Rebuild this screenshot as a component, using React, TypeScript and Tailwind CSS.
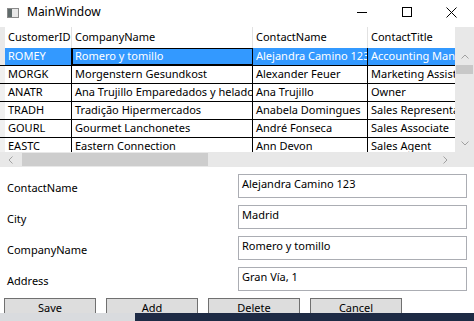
export default function App() {
  const rows = [
    { id: 'ROMEY', company: 'Romero y tomillo', contact: 'Alejandra Camino 123', title: 'Accounting Manager' },
    { id: 'MORGK', company: 'Morgenstern Gesundkost', contact: 'Alexander Feuer', title: 'Marketing Assistant' },
    { id: 'ANATR', company: 'Ana Trujillo Emparedados y helados', contact: 'Ana Trujillo', title: 'Owner' },
    { id: 'TRADH', company: 'Tradição Hipermercados', contact: 'Anabela Domingues', title: 'Sales Representative' },
    { id: 'GOURL', company: 'Gourmet Lanchonetes', contact: 'André Fonseca', title: 'Sales Associate' },
    { id: 'EASTC', company: 'Eastern Connection', contact: 'Ann Devon', title: 'Sales Agent' },
  ]

  const fields = [
    { label: 'ContactName', value: 'Alejandra Camino 123' },
    { label: 'City', value: 'Madrid' },
    { label: 'CompanyName', value: 'Romero y tomillo' },
    { label: 'Address', value: 'Gran Vía, 1' },
  ]

  const cell = 'shrink-0 h-full px-[3px] flex items-center whitespace-nowrap overflow-hidden'

  return (
    <div className="relative w-[474px] h-[321px] bg-white overflow-hidden flex flex-col text-[11px] text-black" style={{ fontFamily: '"Noto Sans", "Open Sans", sans-serif' }}>
      {/* title bar */}
      <div className="h-[27px] shrink-0 flex items-center">
        <svg width="12" height="10" viewBox="0 0 12 10" className="ml-[7px] mt-[-1px]">
          <rect x="0.5" y="0.5" width="11" height="9" fill="#e8e8e8" stroke="#8a8a8a" />
          <rect x="1" y="1" width="4" height="8" fill="#5f6a6a" />
        </svg>
        <span className="ml-[8px] mt-[-3px] text-[12px]">MainWindow</span>
        <div className="ml-auto flex items-center h-full">
          <div className="w-[46px] h-full flex items-center justify-center">
            <div className="w-[10px] h-px bg-black mt-[-3px]" />
          </div>
          <div className="w-[43px] h-full flex items-center justify-center">
            <div className="w-[10px] h-[10px] border border-black mt-[-3px]" />
          </div>
          <div className="w-[46px] h-full flex items-center justify-center">
            <svg width="11" height="11" viewBox="0 0 11 11" className="mt-[-3px]">
              <path d="M0.5 0.5 L10.5 10.5 M10.5 0.5 L0.5 10.5" stroke="black" strokeWidth="1" />
            </svg>
          </div>
        </div>
      </div>

      {/* data grid */}
      <div className="h-[140px] shrink-0 flex relative">
        <div className="w-[455px] flex flex-col overflow-hidden">
          <div className="h-[21px] shrink-0 flex bg-white">
            <div className="w-[5px] shrink-0 bg-[#e9e9e9]" />
            <div className={`${cell} w-[67px] border-r border-[#e2e2e2]`}>CustomerID</div>
            <div className={`${cell} w-[181px] border-r border-[#e2e2e2]`}>CompanyName</div>
            <div className={`${cell} w-[115px] border-r border-[#e2e2e2]`}>ContactName</div>
            <div className={`${cell} w-[90px]`}>ContactTitle</div>
          </div>
          {rows.map((r, i) => {
            const sel = i === 0
            return (
              <div key={r.id} className={`h-[18px] shrink-0 flex border-b border-black ${sel ? 'bg-[#3399ff] text-white' : 'bg-white'}`}>
                <div className={`w-[5px] shrink-0 ${sel ? 'bg-[#e9e9e9]' : 'bg-[#f0f0f0]'}`} />
                <div className={`${cell} w-[67px] border-r border-black`}>{r.id}</div>
                <div className={`${cell} w-[181px] border-r border-black ${sel ? 'outline outline-1 -outline-offset-1 outline-black' : ''}`}>{r.company}</div>
                <div className={`${cell} w-[115px] border-r border-black`}>{r.contact}</div>
                <div className={`${cell} w-[90px]`}>{r.title}</div>
              </div>
            )
          })}
        </div>
        {/* vertical scrollbar */}
        <div className="w-[19px] flex flex-col bg-[#e8e8e8]">
          <div className="h-[21px] shrink-0 bg-[#e8e8e8]" />
          <div className="h-[17px] shrink-0 flex items-center justify-center">
            <svg width="8" height="5" viewBox="0 0 8 5"><path d="M0.5 4.5 L4 1 L7.5 4.5" fill="none" stroke="#a0a0a0" /></svg>
          </div>
          <div className="mx-[1px] h-[9px] bg-[#c8c8c8]" />
          <div className="flex-1" />
          <div className="h-[17px] shrink-0 flex items-center justify-center mb-[15px]">
            <svg width="8" height="5" viewBox="0 0 8 5"><path d="M0.5 0.5 L4 4 L7.5 0.5" fill="none" stroke="#a0a0a0" /></svg>
          </div>
        </div>
        {/* horizontal scrollbar */}
        <div className="absolute left-0 bottom-0 w-[455px] h-[15px] bg-[#e8e8e8] flex items-center">
          <div className="w-[20px] h-full flex items-center justify-center">
            <svg width="5" height="8" viewBox="0 0 5 8"><path d="M4.5 0.5 L1 4 L4.5 7.5" fill="none" stroke="#a0a0a0" /></svg>
          </div>
          <div className="ml-[2px] w-[186px] h-[13px] bg-[#cdcdcd]" />
          <div className="ml-auto w-[20px] h-full flex items-center justify-center">
            <svg width="5" height="8" viewBox="0 0 5 8"><path d="M0.5 0.5 L4 4 L0.5 7.5" fill="none" stroke="#a0a0a0" /></svg>
          </div>
        </div>
      </div>

      {/* form */}
      <div className="flex flex-col gap-[7px] pt-[7px] pr-[7px]">
        {fields.map(f => (
          <div key={f.label} className="h-[24px] flex items-center">
            <span className="pl-[7px] w-[238px] mt-[5px]">{f.label}</span>
            <div className="flex-1 h-full border border-[#abadb3] flex items-center px-[3px]">
              <span className="mt-[-3px]">{f.value}</span>
            </div>
          </div>
        ))}
      </div>

      <div className="flex gap-[10px] pl-[4px] mt-[7px]">
        {['Save', 'Add', 'Delete', 'Cancel'].map(b => (
          <div key={b} className="w-[92px] h-[22px] shrink-0 bg-[#dddddd] border border-[#707070] flex items-center justify-center">
            <span className="mt-[-2px]">{b}</span>
          </div>
        ))}
      </div>

      <div className="absolute top-[313px] left-0 w-[474px] h-[8px] flex">
        <div className="w-[135px] bg-[#d9dbde]" />
        <div className="flex-1 bg-[#1e2b45]" />
      </div>
    </div>
  )
}
